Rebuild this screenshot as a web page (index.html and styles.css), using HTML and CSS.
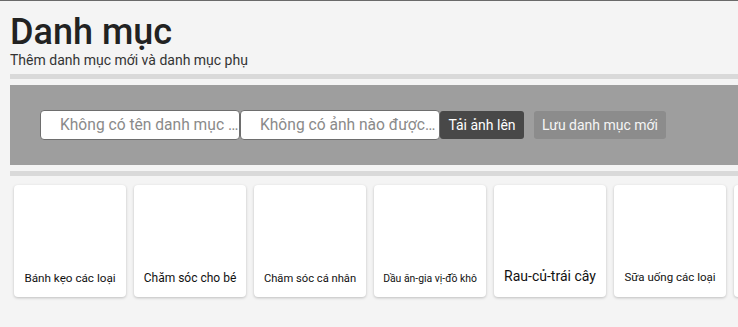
FILE: index.html
```html
<!DOCTYPE html>
<html lang="vi">
<head>
<meta charset="utf-8">
<title>Danh mục</title>
<link rel="stylesheet" href="styles.css">
</head>
<body>
<div class="page">
  <h1 class="title">Danh mục</h1>
  <p class="subtitle">Thêm danh mục mới và danh mục phụ</p>
  <div class="divider"></div>
  <div class="panel">
    <div class="form-row">
      <input class="field" type="text" placeholder="Không có tên danh mục nào được nhập">
      <input class="field" type="text" placeholder="Không có ảnh nào được chọn">
      <button class="btn btn-dark">Tải ảnh lên</button>
      <button class="btn btn-light">Lưu danh mục mới</button>
    </div>
  </div>
  <div class="divider"></div>
  <div class="cards">
    <div class="card"><span class="label" style="font-size:11.7px">Bánh kẹo các loại</span></div>
    <div class="card"><span class="label" style="font-size:12px">Chăm sóc cho bé</span></div>
    <div class="card"><span class="label" style="font-size:11.2px">Chăm sóc cá nhân</span></div>
    <div class="card"><span class="label" style="font-size:10.4px">Dầu ăn-gia vị-đồ khô</span></div>
    <div class="card"><span class="label" style="font-size:14px">Rau-củ-trái cây</span></div>
    <div class="card"><span class="label" style="font-size:11.5px">Sữa uống các loại</span></div>
    <div class="card"></div>
  </div>
</div>
</body>
</html>
```

FILE: styles.css
```css
html, body {
  margin: 0;
  padding: 0;
}
body {
  background: #f4f4f4;
  border-top: 1px solid #6a6a6a;
  font-family: Roboto, "Noto Sans", sans-serif;
  color: #212121;
  overflow: hidden;
  width: 738px;
  height: 326px;
}
.page {
  padding: 11px 0 0 10px;
  width: 1000px;
}
.title {
  margin: 0;
  font-size: 36px;
  font-weight: 500;
  line-height: 40px;
  color: #222;
}
.subtitle {
  margin: 0;
  font-size: 14px;
  line-height: 16px;
  color: #333;
}
.divider {
  height: 5px;
  background: #d9d9d9;
  margin-top: 6px;
}
.panel {
  margin-top: 6px;
  height: 80px;
  background: #9e9e9e;
  box-sizing: border-box;
  padding: 25px 0 0 30px;
}
.form-row {
  display: flex;
  align-items: center;
}
.field {
  width: 200px;
  height: 30px;
  box-sizing: border-box;
  border: 1px solid #6e6e6e;
  border-radius: 4px;
  background: #fff;
  padding: 0 0 0 19px;
  font-family: Roboto, sans-serif;
  font-size: 15.6px;
  color: #333;
  text-overflow: ellipsis;
  outline: none;
}
.field::placeholder {
  color: #8a8a8a;
}
.btn {
  height: 28px;
  border: none;
  border-radius: 3px;
  font-family: Roboto, sans-serif;
  font-size: 14px;
  padding: 0;
  white-space: nowrap;
}
.btn-dark {
  background: #484848;
  color: #fff;
  width: 84px;
}
.btn-light {
  background: #8c8c8c;
  color: #f5f5f5;
  width: 132px;
  margin-left: 10px;
}
.cards {
  display: flex;
  gap: 8px;
  margin-top: 9px;
  padding-left: 4px;
}
.card {
  flex: 0 0 112px;
  height: 112px;
  background: #fff;
  border-radius: 4px;
  box-shadow: 0 1px 3px rgba(0, 0, 0, 0.22);
  display: flex;
  align-items: flex-end;
  justify-content: center;
  box-sizing: border-box;
  padding-bottom: 12px;
}
.label {
  color: #111;
  white-space: nowrap;
  line-height: 1.2;
}
```
